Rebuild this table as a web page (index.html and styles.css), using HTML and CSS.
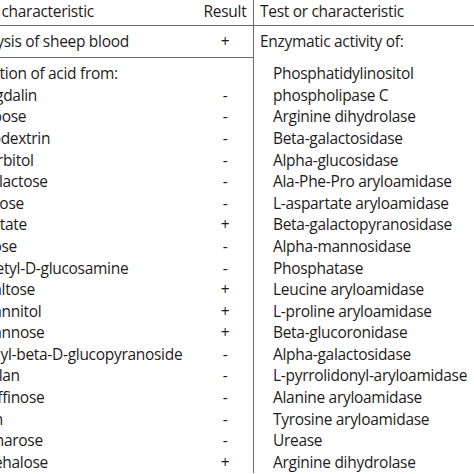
FILE: index.html
```html
<!DOCTYPE html>
<html>
<head>
<meta charset="utf-8">
<link rel="stylesheet" href="styles.css">
</head>
<body>
<div class="table">
  <div class="row head">
    <div class="c1">Test or characteristic</div>
    <div class="c2">Result</div>
    <div class="c3">Test or characteristic</div>
  </div>
  <div class="row sub">
    <div class="c1 rule">Hemolysis of sheep blood</div>
    <div class="c2 rule">+</div>
    <div class="c3">Enzymatic activity of:</div>
  </div>
  <div class="row first">
    <div class="c1">Production of acid from:</div>
    <div class="c2"></div>
    <div class="c3 ind">Phosphatidylinositol</div>
  </div>
  <div class="row"><div class="c1 ind">Amygdalin</div><div class="c2">-</div><div class="c3 ind">phospholipase C</div></div>
  <div class="row"><div class="c1 ind">D-Ribose</div><div class="c2">-</div><div class="c3 ind">Arginine dihydrolase</div></div>
  <div class="row"><div class="c1 ind">Cyclodextrin</div><div class="c2">-</div><div class="c3 ind">Beta-galactosidase</div></div>
  <div class="row"><div class="c1 ind">D-Sorbitol</div><div class="c2">-</div><div class="c3 ind">Alpha-glucosidase</div></div>
  <div class="row"><div class="c1 ind">D-Galactose</div><div class="c2">-</div><div class="c3 ind">Ala-Phe-Pro aryloamidase</div></div>
  <div class="row"><div class="c1 ind">D-Xylose</div><div class="c2">-</div><div class="c3 ind">L-aspartate aryloamidase</div></div>
  <div class="row"><div class="c1 ind">L-Lactate</div><div class="c2">+</div><div class="c3 ind">Beta-galactopyranosidase</div></div>
  <div class="row"><div class="c1 ind">Lactose</div><div class="c2">-</div><div class="c3 ind">Alpha-mannosidase</div></div>
  <div class="row"><div class="c1 ind">N-acetyl-D-glucosamine</div><div class="c2">-</div><div class="c3 ind">Phosphatase</div></div>
  <div class="row"><div class="c1 ind">D-Maltose</div><div class="c2">+</div><div class="c3 ind">Leucine aryloamidase</div></div>
  <div class="row"><div class="c1 ind">D-Mannitol</div><div class="c2">+</div><div class="c3 ind">L-proline aryloamidase</div></div>
  <div class="row"><div class="c1 ind">D-Mannose</div><div class="c2">+</div><div class="c3 ind">Beta-glucoronidase</div></div>
  <div class="row"><div class="c1 ind">Methyl-beta-D-glucopyranoside</div><div class="c2">-</div><div class="c3 ind">Alpha-galactosidase</div></div>
  <div class="row"><div class="c1 ind">Pullulan</div><div class="c2">-</div><div class="c3 ind">L-pyrrolidonyl-aryloamidase</div></div>
  <div class="row"><div class="c1 ind">D-Raffinose</div><div class="c2">-</div><div class="c3 ind">Alanine aryloamidase</div></div>
  <div class="row"><div class="c1 ind">Inulin</div><div class="c2">-</div><div class="c3 ind">Tyrosine aryloamidase</div></div>
  <div class="row"><div class="c1 ind">Saccharose</div><div class="c2">-</div><div class="c3 ind">Urease</div></div>
  <div class="row"><div class="c1 ind">D-Trehalose</div><div class="c2">+</div><div class="c3 ind">Arginine dihydrolase</div></div>
</div>
</body>
</html>
```
FILE: styles.css
```css
html, body {
  margin: 0;
  padding: 0;
  background: #ffffff;
  overflow: hidden;
}
body {
  width: 474px;
  height: 474px;
  font-family: "Open Sans", "Liberation Sans", sans-serif;
  font-size: 15.5px;
  letter-spacing: -0.3px;
  line-height: 21.6px;
  color: #1f1b1c;
}
.table {
  margin-left: -50px;
  width: 524px;
}
.row {
  display: grid;
  grid-template-columns: 247px 56px 1fr;
}
.c1 {
  white-space: nowrap;
  overflow: hidden;
}
.c2 {
  text-align: center;
  white-space: nowrap;
}
.c3 {
  border-left: 1px solid #6a6a6a;
  padding-left: 6px;
  white-space: nowrap;
}
.c1.ind {
  padding-left: 14px;
}
.c3.ind {
  padding-left: 19px;
}
.head > div {
  height: 24px;
  padding-top: 1px;
  border-bottom: 1px solid #6a6a6a;
}
.sub > div {
  padding-top: 5px;
  padding-bottom: 4.4px;
}
.sub > .rule {
  border-bottom: 1px solid #6a6a6a;
}
.first > div {
  padding-top: 5.2px;
}
```
